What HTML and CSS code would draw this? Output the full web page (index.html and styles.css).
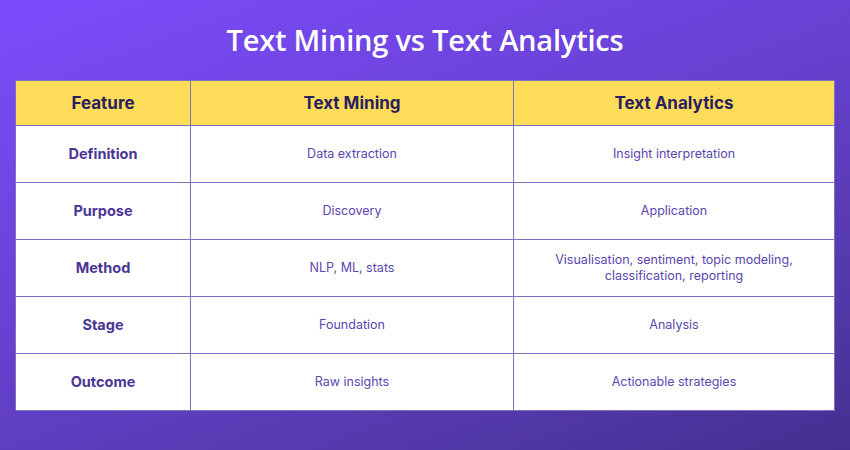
FILE: index.html
```html
<!DOCTYPE html>
<html>
<head>
<meta charset="utf-8">
<link rel="stylesheet" href="styles.css">
</head>
<body>
<div class="page">
  <h1 class="title">Text Mining vs Text Analytics</h1>
  <table class="cmp">
    <thead>
      <tr><th class="c1">Feature</th><th class="c2">Text Mining</th><th class="c3">Text Analytics</th></tr>
    </thead>
    <tbody>
      <tr><td class="label">Definition</td><td>Data extraction</td><td>Insight interpretation</td></tr>
      <tr><td class="label">Purpose</td><td>Discovery</td><td>Application</td></tr>
      <tr><td class="label">Method</td><td>NLP, ML, stats</td><td>Visualisation, sentiment, topic modeling,<br>classification, reporting</td></tr>
      <tr><td class="label">Stage</td><td>Foundation</td><td>Analysis</td></tr>
      <tr><td class="label">Outcome</td><td>Raw insights</td><td>Actionable strategies</td></tr>
    </tbody>
  </table>
</div>
</body>
</html>
```

FILE: styles.css
```css
html, body {
  margin: 0;
  padding: 0;
}
.page {
  width: 850px;
  height: 450px;
  box-sizing: border-box;
  padding: 21px 15px 0 15px;
  background: linear-gradient(160deg, #7c4cfc 0%, #6a42d6 40%, #553aae 75%, #433090 100%);
  overflow: hidden;
}
.title {
  margin: 0 0 17px 0;
  height: 42px;
  line-height: 38px;
  text-align: center;
  color: #ffffff;
  font-family: "Open Sans", "Noto Sans", sans-serif;
  font-weight: 600;
  font-size: 29px;
  letter-spacing: -0.2px;
}
.cmp {
  width: 820px;
  border-collapse: collapse;
  table-layout: fixed;
  font-family: "Inter", "Noto Sans", sans-serif;
}
.c1 { width: 174px; }
.c2 { width: 322px; }
.cmp th, .cmp td {
  border: 1px solid #7c71bd;
  text-align: center;
  vertical-align: middle;
  padding: 0;
}
.cmp th {
  background: #fddc5a;
  color: #2b1f5e;
  height: 44px;
  font-size: 17px;
  font-weight: 700;
}
.cmp td {
  background: #ffffff;
  height: 56px;
  color: #5b46b0;
  font-size: 12.5px;
  line-height: 16px;
  font-weight: 400;
}
.cmp td.label {
  color: #4a3596;
  font-size: 14.5px;
  font-weight: 700;
}
```
